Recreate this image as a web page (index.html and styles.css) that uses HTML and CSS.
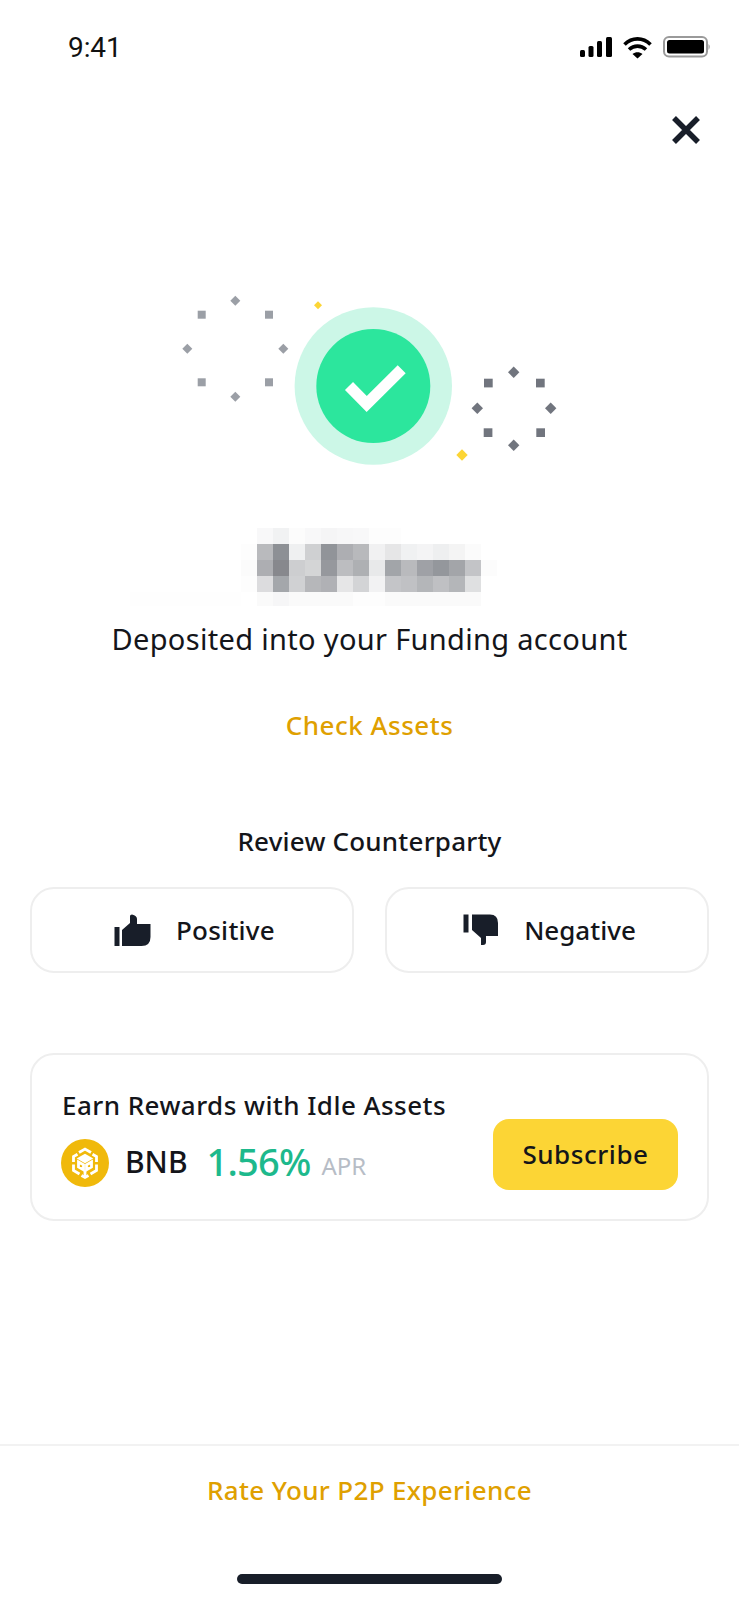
FILE: index.html
```html
<!DOCTYPE html>
<html lang="en">
<head>
  <meta charset="UTF-8">
  <title>Deposit complete</title>
  <link rel="stylesheet" href="styles.css">
</head>
<body>
  <div id="status-bar">
    <span id="clock">9:41</span>
    <svg width="134" height="24" viewBox="0 0 134 24">
      <rect x="2" y="15" width="5" height="7" rx="1.5"/>
      <rect x="10.5" y="11" width="5" height="11" rx="1.5"/>
      <rect x="19" y="6" width="5" height="16" rx="1.5"/>
      <rect x="28" y="2" width="6" height="20" rx="1.5"/>
      <path d="M46.5 9.5C54 2 65 2 72.5 9.5M51 14.5C56 10 63 10 68 14.5" fill="none" stroke="#000" stroke-width="3.6"/>
      <path d="M54.500 19C57.500 16.800 61.500 16.800 64.500 19L59.500 23.500Z"/>
      <rect x="86" y="2" width="43" height="19.500" rx="5" fill="none" stroke="#9a9a9a" stroke-width="2"/>
      <rect x="89" y="5" width="37" height="13.500" rx="2.500"/>
      <path d="M130.500 9Q133 11.500 130.500 15Z" fill="#9a9a9a"/>
    </svg>
  </div>
  <div id="top-bar">
    <svg width="30" height="30" viewBox="0 0 30 30">
      <path d="M3 3L27 27M27 3L3 27" fill="none" stroke="#181e29" stroke-width="5.500"/>
    </svg>
  </div>

  <svg id="hero" width="400" height="200" viewBox="0 0 400 200">
    <g fill="#9b9fa6">
      <rect x="27.700" y="30.700" width="8" height="8"/>
      <rect x="95" y="30.700" width="8" height="8"/>
      <rect x="27.700" y="98.300" width="8" height="8"/>
      <rect x="95" y="98.300" width="8" height="8"/>
      <path d="M65.300 15.700l5 5-5 5-5-5z"/>
      <path d="M17.300 63.700l5 5-5 5-5-5z"/>
      <path d="M113.300 63.700l5 5-5 5-5-5z"/>
      <path d="M65.300 111.700l5 5-5 5-5-5z"/>
    </g>
    <g fill="#71757e">
      <rect x="314" y="98.700" width="8.700" height="8.700"/>
      <rect x="366" y="98.700" width="8.700" height="8.700"/>
      <rect x="313.700" y="148.300" width="8.700" height="8.700"/>
      <rect x="366.300" y="148.300" width="8.700" height="8.700"/>
      <path d="M343.700 86.600l5.700 5.700-5.700 5.700-5.700-5.700z"/>
      <path d="M307.300 122.600l5.700 5.700-5.700 5.700-5.700-5.700z"/>
      <path d="M380.700 122.600l5.700 5.700-5.700 5.700-5.700-5.700z"/>
      <path d="M343.700 159.600l5.700 5.700-5.700 5.700-5.700-5.700z"/>
    </g>
    <g fill="#fcd535">
      <path d="M148 21.300l4 4-4 4-4-4z"/>
      <path d="M292 169.300l5.700 5.700-5.700 5.700-5.700-5.700z"/>
    </g>
    <circle cx="203.300" cy="106" r="78.700" fill="#ccf7e7"/>
    <circle cx="203.300" cy="106" r="57" fill="#2ce69d"/>
    <path d="M179 106L196.700 124L231.700 89.300" fill="none" stroke="#fff" stroke-width="11.300"/>
  </svg>

  <!-- pixelated amount -->
  <svg id="amount" width="500" height="100" viewBox="0 0 500 100" shape-rendering="crispEdges">
    <g transform="translate(137 18)">
      <rect x="0" y="0" width="16" height="16" fill="#f8f8f9"/>
      <rect x="16" y="0" width="16" height="16" fill="#f1f2f3"/>
      <rect x="32" y="0" width="16" height="16" fill="#fcfcfc"/>
      <rect x="48" y="0" width="16" height="16" fill="#f8f8f9"/>
      <rect x="64" y="0" width="16" height="16" fill="#f5f5f6"/>
      <rect x="80" y="0" width="16" height="16" fill="#f7f7f8"/>
      <rect x="96" y="0" width="16" height="16" fill="#f8f8f9"/>
      <rect x="112" y="0" width="32" height="16" fill="#fdfdfd"/>

      <rect x="-16" y="16" width="16" height="16" fill="#fdfdfd"/>
      <rect x="0" y="16" width="16" height="16" fill="#b9babd"/>
      <rect x="16" y="16" width="16" height="16" fill="#8d9095"/>
      <rect x="32" y="16" width="16" height="16" fill="#eff0f1"/>
      <rect x="48" y="16" width="16" height="16" fill="#cfd0d2"/>
      <rect x="64" y="16" width="16" height="16" fill="#919499"/>
      <rect x="80" y="16" width="16" height="16" fill="#adaeb2"/>
      <rect x="96" y="16" width="16" height="16" fill="#b8b9bc"/>
      <rect x="112" y="16" width="16" height="16" fill="#f1f1f2"/>
      <rect x="128" y="16" width="16" height="16" fill="#e6e6e7"/>
      <rect x="144" y="16" width="16" height="16" fill="#f0f1f2"/>
      <rect x="160" y="16" width="16" height="16" fill="#f4f4f5"/>
      <rect x="176" y="16" width="16" height="16" fill="#eeeff0"/>
      <rect x="192" y="16" width="16" height="16" fill="#f4f4f4"/>
      <rect x="208" y="16" width="16" height="16" fill="#fbfbfb"/>

      <rect x="-16" y="32" width="16" height="16" fill="#fbfbfb"/>
      <rect x="0" y="32" width="16" height="16" fill="#adaeb2"/>
      <rect x="16" y="32" width="16" height="16" fill="#87888d"/>
      <rect x="32" y="32" width="16" height="16" fill="#cdced0"/>
      <rect x="48" y="32" width="16" height="16" fill="#d4d5d6"/>
      <rect x="64" y="32" width="16" height="16" fill="#96989d"/>
      <rect x="80" y="32" width="16" height="16" fill="#bcbdc0"/>
      <rect x="96" y="32" width="16" height="16" fill="#aeb0b3"/>
      <rect x="112" y="32" width="16" height="16" fill="#e8e9ea"/>
      <rect x="128" y="32" width="16" height="16" fill="#a2a5a9"/>
      <rect x="144" y="32" width="16" height="16" fill="#b9babd"/>
      <rect x="160" y="32" width="16" height="16" fill="#9fa1a6"/>
      <rect x="176" y="32" width="16" height="16" fill="#94979c"/>
      <rect x="192" y="32" width="16" height="16" fill="#a3a5a9"/>
      <rect x="208" y="32" width="16" height="16" fill="#c3c4c7"/>
      <rect x="224" y="32" width="16" height="16" fill="#fcfcfc"/>

      <rect x="-16" y="48" width="16" height="16" fill="#fdfdfd"/>
      <rect x="0" y="48" width="16" height="16" fill="#dcdcde"/>
      <rect x="16" y="48" width="16" height="16" fill="#a4a7ab"/>
      <rect x="32" y="48" width="16" height="16" fill="#d0d1d3"/>
      <rect x="48" y="48" width="16" height="16" fill="#b6b7ba"/>
      <rect x="64" y="48" width="16" height="16" fill="#b0b1b5"/>
      <rect x="80" y="48" width="16" height="16" fill="#e6e6e7"/>
      <rect x="96" y="48" width="16" height="16" fill="#d3d4d6"/>
      <rect x="112" y="48" width="16" height="16" fill="#f2f2f3"/>
      <rect x="128" y="48" width="16" height="16" fill="#c4c5c8"/>
      <rect x="144" y="48" width="16" height="16" fill="#c0c1c4"/>
      <rect x="160" y="48" width="16" height="16" fill="#b4b6b9"/>
      <rect x="176" y="48" width="16" height="16" fill="#bfc0c3"/>
      <rect x="192" y="48" width="16" height="16" fill="#b4b6b9"/>
      <rect x="208" y="48" width="16" height="16" fill="#dfe0e1"/>

      <rect x="-127" y="64" width="111" height="14" fill="#fefefe"/>
      <rect x="0" y="64" width="16" height="14" fill="#fafafa"/>
      <rect x="16" y="64" width="16" height="14" fill="#f6f6f7"/>
      <rect x="32" y="64" width="64" height="14" fill="#fafafa"/>
      <rect x="96" y="64" width="32" height="14" fill="#fdfdfd"/>
      <rect x="128" y="64" width="96" height="14" fill="#fafafa"/>
    </g>
  </svg>

  <div id="deposited">Deposited into your Funding account</div>
  <div id="check-assets" class="gold">Check Assets</div>
  <div id="review-title">Review Counterparty</div>

  <div id="review-row">
    <div class="review-btn">
      <svg width="37" height="33" viewBox="14 17 37 33">
        <rect x="14.500" y="30" width="5" height="19"/>
        <path d="M22 49V33L30 26V19Q30 17.500 32 17.500Q37 18.500 37 22V27H50.500V40Q50.500 49 41.500 49Z"/>
      </svg>
      <span class="positive-text">Positive</span>
    </div>
    <div class="review-btn">
      <svg width="36" height="32" viewBox="13 21 36 32">
        <rect x="13.500" y="21.500" width="5" height="18"/>
        <path d="M22 21.500H40Q48 21.500 48 30V43H36V49Q36 52 33 52H31V45L22 37Z"/>
      </svg>
      <span>Negative</span>
    </div>
  </div>

  <div id="earn-card">
    <div id="earn-info">
      <div id="earn-title">Earn Rewards with Idle Assets</div>
      <div id="earn-line">
        <svg class="coin" width="48" height="48" viewBox="0 0 48 48">
          <circle cx="24" cy="24" r="24" fill="#f0b90b"/>
          <g fill="none" stroke="#fff" stroke-width="2.800">
            <path d="M18 13.500L24 10L30 13.500"/>
            <path d="M12.500 23V17.500L16.500 15.200M35.500 23V17.500L31.500 15.200"/>
            <path d="M12.500 25.500V31.500L18.500 35M35.500 25.500V31.500L29.500 35"/>
            <path d="M20.500 36.500L24 38.500L27.500 36.500"/>
            <path d="M18.500 19.500L24 16.300L29.500 19.500L24 22.700Z" fill="#fff"/>
            <path d="M17.500 23V28L22.500 30.800V25.800ZM30.500 23V28L25.500 30.800V25.800Z"/>
            <path d="M24 31V37"/>
          </g>
        </svg>
        <span id="coin-name">BNB</span>
        <span id="apr-value">1.56%</span>
        <span id="apr-label">APR</span>
      </div>
    </div>
    <div id="subscribe">Subscribe</div>
  </div>

  <div id="footer">
    <div id="rate" class="gold">Rate Your P2P Experience</div>
    <div id="home-bar"></div>
  </div>
</body>
</html>
```

FILE: styles.css
```css
* {
    box-sizing: border-box;
}
body {
    margin: 0;
    width: 739px;
    height: 1600px;
    display: flex;
    flex-direction: column;
    background: #fff;
    color: #14151a;
    font-family: 'Noto Sans', 'Roboto', sans-serif;
    overflow: hidden;
}
svg {
    display: block;
    flex: none;
}
#status-bar {
    height: 94px;
    padding: 0 27px 0 68px;
    display: flex;
    align-items: center;
    justify-content: space-between;
}
#clock {
    font-family: 'Roboto', sans-serif;
    font-size: 28px;
    letter-spacing: -0.1px;
    color: #111;
}
#top-bar {
    padding: 21px 38px 0 0;
    display: flex;
    justify-content: flex-end;
}
#hero {
    margin: 135px 0 0 170px;
}
#amount {
    margin: 30px 0 9px 120px;
    height: 100px;
}
#deposited, #check-assets, #review-title {
    height: 40px;
    line-height: 40px;
    text-align: center;
}
#deposited {
    font-size: 29px;
    letter-spacing: 0.32px;
}
.gold {
    color: #dfa000;
}
#check-assets {
    margin-top: 46px;
    font-size: 26px;
    font-weight: 500;
    letter-spacing: 0.5px;
}
#review-title {
    margin-top: 76px;
    font-size: 26px;
    font-weight: 500;
    letter-spacing: 0.2px;
}
#review-row {
    margin-top: 26px;
    padding: 0 30px;
    display: flex;
    gap: 31px;
}
.review-btn {
    flex: 1;
    height: 86px;
    padding-left: 5px;
    border: 2px solid #eeeeee;
    border-radius: 24px;
    display: flex;
    align-items: center;
    justify-content: center;
    gap: 25px;
    font-size: 26px;
    font-weight: 500;
}
.review-btn svg {
    fill: #181e29;
}
.positive-text {
    letter-spacing: 0.25px;
}
#earn-card {
    margin: 80px 30px 0;
    height: 168px;
    border: 2px solid #eeeeee;
    border-radius: 24px;
    padding: 0 29px 0 30px;
    display: flex;
    align-items: center;
    justify-content: space-between;
}
#earn-title {
    font-size: 26px;
    font-weight: 500;
    line-height: 36px;
    letter-spacing: 0.45px;
}
#earn-line {
    margin-top: 12px;
    display: flex;
    align-items: center;
}
.coin {
    margin: 2px 0 -2px -1px;
}
#coin-name {
    margin-left: 16px;
    font-size: 30px;
    font-weight: 500;
}
#apr-value {
    margin-left: 19px;
    font-size: 38px;
    font-weight: 500;
    letter-spacing: -0.8px;
    color: #1db98c;
}
#apr-label {
    margin: 8px 0 0 11px;
    font-size: 24px;
    color: #b7bdc6;
}
#subscribe {
    width: 185px;
    height: 71px;
    margin-top: 34px;
    border-radius: 16px;
    background: #fcd535;
    display: flex;
    align-items: center;
    justify-content: center;
    font-size: 26px;
    font-weight: 500;
    letter-spacing: 0.55px;
}
#footer {
    margin-top: auto;
    height: 156px;
    border-top: 2px solid #f2f2f2;
    display: flex;
    flex-direction: column;
    align-items: center;
}
#rate {
    margin-top: 24px;
    font-size: 26px;
    font-weight: 500;
    line-height: 40px;
    letter-spacing: 0.34px;
}
#home-bar {
    margin-top: auto;
    margin-bottom: 16px;
    width: 265px;
    height: 10px;
    border-radius: 5px;
    background: #181e29;
}
```
